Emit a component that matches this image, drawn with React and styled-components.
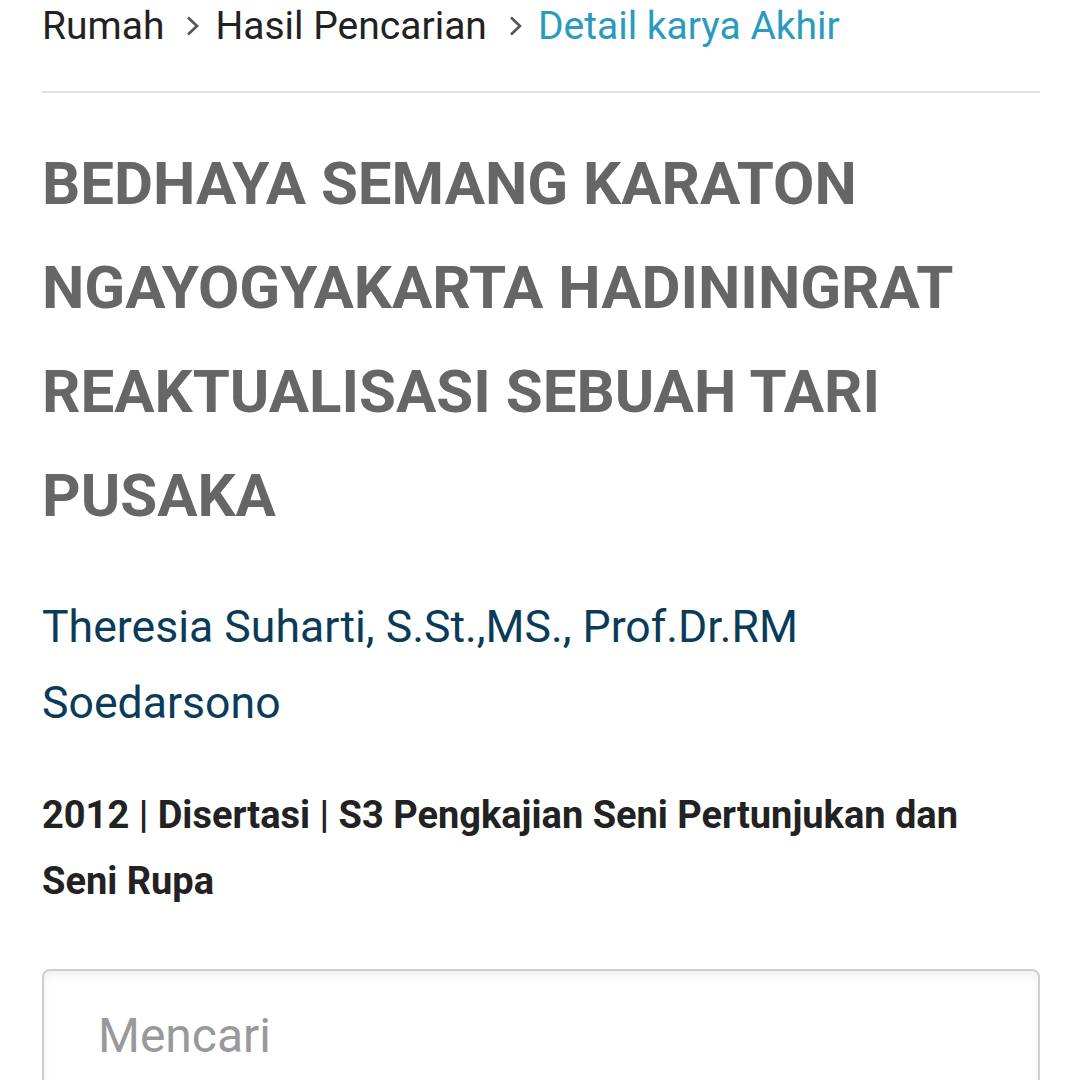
import styled, { createGlobalStyle } from "styled-components";

const Global = createGlobalStyle`
  html, body {
    margin: 0;
    padding: 0;
    background: #fff;
    font-family: Roboto, "Noto Sans", "Liberation Sans", sans-serif;
  }
`;

const Page = styled.div`
  width: 1080px;
  height: 1080px;
  overflow: hidden;
  box-sizing: border-box;
  padding: 0 40px 0 42px;
`;

const Crumbs = styled.nav`
  display: flex;
  align-items: center;
  height: 52px;
  padding-bottom: 39px;
  border-bottom: 2px solid #e3e3e3;
`;

const Crumb = styled.span`
  font-size: 39px;
  line-height: 52px;
  color: ${(p) => (p.active ? "#2a9bbd" : "#222")};
`;

const Sep = styled.svg`
  width: 14px;
  height: 20px;
  margin: 0 15px 0 22px;
  flex: none;
`;

const Title = styled.h1`
  margin: 39px 0 0;
  font-size: 60px;
  line-height: 104px;
  font-weight: 700;
  color: #666;
`;

const Authors = styled.p`
  margin: 41px 0 0;
  font-size: 44.6px;
  line-height: 76px;
  color: #0a3c5a;
`;

const Meta = styled.p`
  margin: 41px 0 0;
  font-size: 38px;
  line-height: 66px;
  font-weight: 700;
  color: #222;
`;

const SearchBox = styled.div`
  margin-top: 55px;
  height: 160px;
  box-sizing: border-box;
  border: 2px solid #cfcfcf;
  border-radius: 8px;
  box-shadow: inset 0 4px 8px rgba(0, 0, 0, 0.06);
  padding: 36px 54px;
`;

const SearchInput = styled.input`
  border: none;
  outline: none;
  background: transparent;
  width: 100%;
  font-family: Roboto, "Noto Sans", sans-serif;
  font-size: 48px;
  color: #333;
  padding: 0;
  &::placeholder {
    color: #999;
  }
`;

const Chevron = () => (
  <Sep viewBox="0 0 14 20">
    <path d="M2 1.5L11 10 2 18.5" fill="none" stroke="#555" strokeWidth="2.6" />
  </Sep>
);

export default function App() {
  return (
    <Page>
      <Global />
      <Crumbs>
        <Crumb>Rumah</Crumb>
        <Chevron />
        <Crumb>Hasil Pencarian</Crumb>
        <Chevron />
        <Crumb active>Detail karya Akhir</Crumb>
      </Crumbs>
      <Title>BEDHAYA SEMANG KARATON NGAYOGYAKARTA HADININGRAT REAKTUALISASI SEBUAH TARI PUSAKA</Title>
      <Authors>Theresia Suharti, S.St.,MS., Prof.Dr.RM Soedarsono</Authors>
      <Meta>2012 | Disertasi | S3 Pengkajian Seni Pertunjukan dan Seni Rupa</Meta>
      <SearchBox>
        <SearchInput placeholder="Mencari" />
      </SearchBox>
    </Page>
  );
}
